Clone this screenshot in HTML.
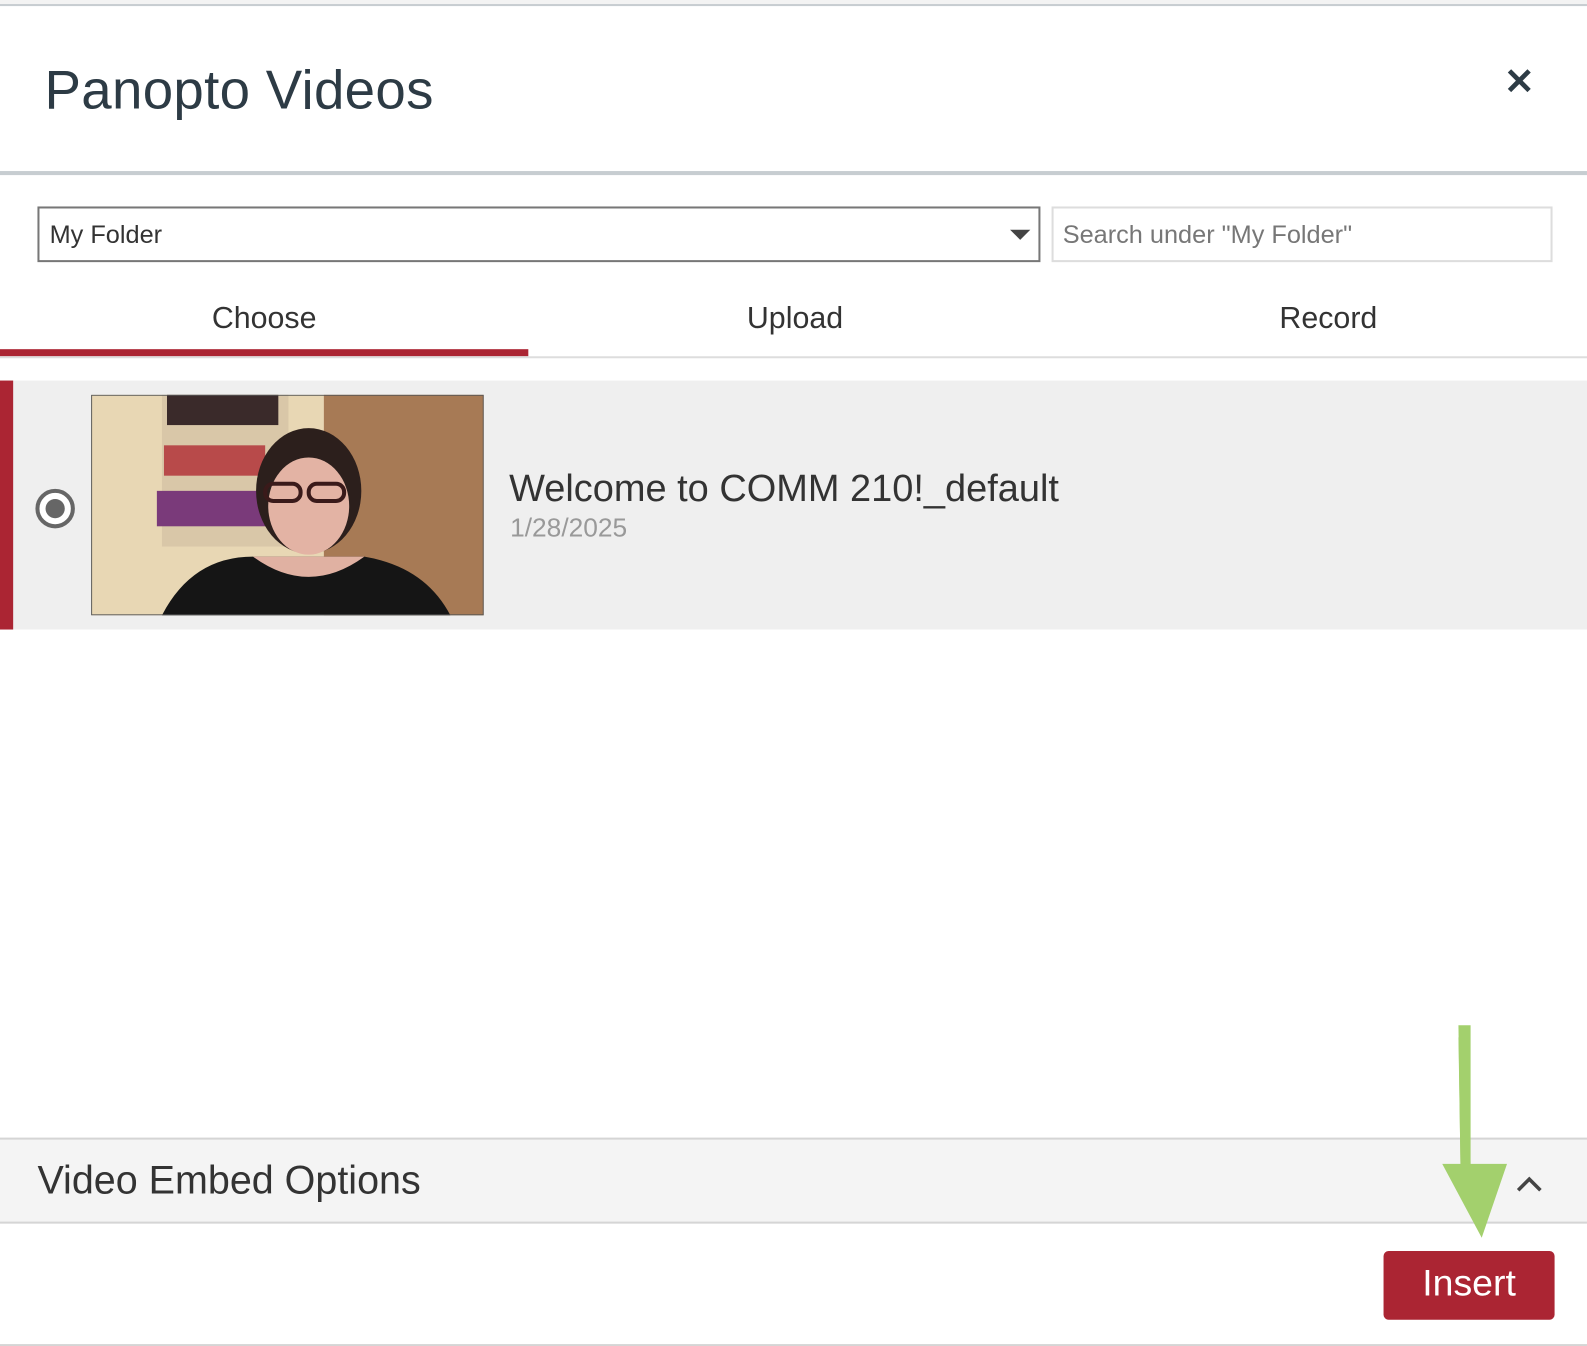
<!DOCTYPE html>
<html><head><meta charset="utf-8"><style>
*{margin:0;padding:0;box-sizing:border-box}
body{width:1587px;height:1345px;background:#fff;font-family:"Liberation Sans",sans-serif;position:relative;overflow:hidden}
#w{position:absolute;left:0;top:0;width:1568px;height:1330px;transform:scale(1.0121);transform-origin:0 0}
.a{position:absolute}
</style></head><body><div id="w">
<div class="a" style="left:0;top:0;width:1568px;height:6px;background:#f3f3f3;border-bottom:2px solid #c7cdd1"></div>
<div class="a" style="left:44px;top:58px;font-size:54px;color:#2d3b45;letter-spacing:0.3px">Panopto Videos</div>
<div class="a" style="left:1486px;top:60px;font-size:36px;color:#2d3b45;font-weight:bold">✕</div>
<div class="a" style="left:0;top:169px;width:1568px;height:4px;background:#c7cdd1"></div>
<div class="a" style="left:37px;top:204px;width:991px;height:55px;border:2px solid #777;font-size:25px;color:#333;padding:12px 10px">My Folder</div>
<div class="a" style="left:998px;top:227px;width:0;height:0;border-left:10px solid transparent;border-right:10px solid transparent;border-top:10px solid #444"></div>
<div class="a" style="left:1039px;top:204px;width:495px;height:55px;border:2px solid #ddd;font-size:25px;color:#777;padding:12px 9px">Search under "My Folder"</div>
<div class="a" style="left:0;top:298px;width:522px;text-align:center;font-size:30px;color:#333">Choose</div>
<div class="a" style="left:522px;top:298px;width:527px;text-align:center;font-size:30px;color:#333">Upload</div>
<div class="a" style="left:1049px;top:298px;width:527px;text-align:center;font-size:30px;color:#333">Record</div>
<div class="a" style="left:0;top:345px;width:522px;height:7px;background:#ab2533"></div>
<div class="a" style="left:0;top:352px;width:1568px;height:2px;background:#ddd"></div>
<div class="a" style="left:0;top:376px;width:1568px;height:246px;background:#efefef"></div>
<div class="a" style="left:0;top:376px;width:13px;height:246px;background:#ab2533"></div>
<div class="a" style="left:35px;top:483px;width:39px;height:39px;border-radius:50%;border:4px solid #666;background:#fff"></div>
<div class="a" style="left:45px;top:493px;width:19px;height:19px;border-radius:50%;background:#666"></div>
<svg class="a" style="left:90px;top:390px" width="388" height="218" viewBox="0 0 388 218">
<rect width="388" height="218" fill="#e8d7b4"/>
<rect x="230" y="0" width="158" height="218" fill="#a77a55"/>
<rect x="70" y="0" width="125" height="150" fill="#d9c7a8"/>
<rect x="75" y="0" width="110" height="30" fill="#3a2a2a"/>
<rect x="72" y="50" width="100" height="30" fill="#b84a4a"/>
<rect x="65" y="95" width="110" height="35" fill="#7a3a7a"/>
<ellipse cx="215" cy="95" rx="52" ry="62" fill="#2c1f1c"/>
<ellipse cx="215" cy="110" rx="40" ry="48" fill="#e3b3a4"/>
<path d="M70 218 Q100 160 160 160 L270 160 Q330 170 355 218Z" fill="#151515"/>
<path d="M160 160 Q215 200 270 160Z" fill="#e0b1a2"/>
<rect x="172" y="88" width="35" height="17" rx="8" fill="none" stroke="#3a1a1a" stroke-width="4"/>
<rect x="215" y="88" width="35" height="17" rx="8" fill="none" stroke="#3a1a1a" stroke-width="4"/>
<rect x="0.5" y="0.5" width="387" height="217" fill="none" stroke="#555" stroke-width="1"/>
</svg>
<div class="a" style="left:503px;top:461px;font-size:37.5px;color:#333">Welcome to COMM 210!_default</div>
<div class="a" style="left:504px;top:506px;font-size:26px;color:#999">1/28/2025</div>
<div class="a" style="left:0;top:1124px;width:1568px;height:85px;background:#f4f4f4;border-top:2px solid #d5d5d5;border-bottom:2px solid #d5d5d5"></div>
<div class="a" style="left:37px;top:1145px;font-size:39px;color:#333">Video Embed Options</div>
<svg class="a" style="left:1497px;top:1160px" width="28" height="20"><path d="M3 16 L14 5 L25 16" fill="none" stroke="#444" stroke-width="3.5"/></svg>
<div class="a" style="left:1367px;top:1236px;width:169px;height:68px;background:#ab2533;border-radius:5px;color:#fff;font-size:37px;text-align:center;line-height:64px">Insert</div>
<svg class="a" style="left:1410px;top:1010px" width="90" height="230"><path d="M31 15 L41 15 L43 140 L79 140 L54 213 L15 140 L33 140Z" fill="#a3d06d"/><path d="M31 3 L43 3 L43 140 L33 140Z" fill="#a3d06d"/></svg>
<div class="a" style="left:0;top:1328px;width:1568px;height:2px;background:#d5d5d5"></div>
</div></body></html>
